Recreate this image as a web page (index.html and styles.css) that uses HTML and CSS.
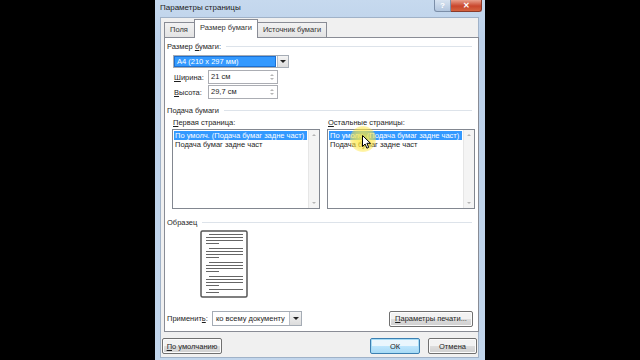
FILE: index.html
```html
<!DOCTYPE html>
<html lang="ru">
  <head>
    <meta charset="UTF-8" />
    <title>Параметры страницы</title>
    <link rel="stylesheet" href="styles.css">
  </head>
  <body>
    <div class="window">
      <div class="titlebar">
        <span class="title">Параметры страницы</span>
        <div class="caption-buttons">
          <span class="btn-help">?</span>
          <span class="btn-close">&#x2715;</span>
        </div>
      </div>
      <div class="client">
        <div class="tabs">
          <div class="tab">Поля</div>
          <div class="tab tab-active">Размер бумаги</div>
          <div class="tab">Источник бумаги</div>
        </div>
        <div class="panel">
          <div class="group-head head-size"><span>Размер <u>б</u>умаги:</span><i class="line"></i></div>
          <div class="combo combo-size">
            <span class="combo-value selected">A4 (210 x 297 мм)</span>
            <span class="combo-arrow"><b class="tri"></b></span>
          </div>
          <div class="field-row row-first">
            <span class="field-label"><u>Ш</u>ирина:</span>
            <div class="spin"><span class="spin-value">21 см</span><span class="spin-btns"><b class="up"></b><b class="down"></b></span></div>
          </div>
          <div class="field-row">
            <span class="field-label"><u>В</u>ысота:</span>
            <div class="spin"><span class="spin-value">29,7 см</span><span class="spin-btns"><b class="up"></b><b class="down"></b></span></div>
          </div>
          <div class="group-head head-feed"><span>Подача бумаги</span><i class="line"></i></div>
          <div class="feed">
            <div class="feed-col">
              <div class="feed-label"><u>П</u>ервая страница:</div>
              <div class="listbox">
                <div class="list-items">
                  <div class="item selected">По умолч. (Подача бумаг задне част)</div>
                  <div class="item">Подача бумаг задне част</div>
                </div>
                <div class="scrollbar"><b class="up"></b><b class="down"></b></div>
              </div>
            </div>
            <div class="feed-col">
              <div class="feed-label"><u>О</u>стальные страницы:</div>
              <div class="listbox">
                <div class="list-items">
                  <div class="item selected">По умолч. (Подача бумаг задне част)</div>
                  <div class="item">Подача бумаг задне част</div>
                </div>
                <div class="scrollbar"><b class="up"></b><b class="down"></b></div>
              </div>
            </div>
          </div>
          <div class="group-head head-sample"><span>Образец</span><i class="line"></i></div>
          <div class="sample">
            <svg width="48" height="68" viewBox="0 0 48 68">
              <rect x="1" y="1" width="46" height="66" rx="1.5" fill="#fff" stroke="#555" stroke-width="1.5"/>
              <g stroke="#666" stroke-width="1">
                <path d="M9 4.5h34M6 7.5h37M6 10.5h37M6 13.5h13"/>
                <path d="M9 18.5h34M6 21.5h37M6 24.5h37M6 27.5h13"/>
                <path d="M9 32.5h34M6 35.5h37M6 38.5h37M6 41.5h13"/>
                <path d="M9 46.5h34M6 49.5h37M6 52.5h37M6 55.5h13"/>
                <path d="M9 59.5h34M6 62.5h13"/>
              </g>
            </svg>
          </div>
          <div class="apply-row">
            <span class="apply-label">Применит<u>ь</u>:</span>
            <div class="combo combo-apply">
              <span class="combo-value">ко всему документу</span>
              <span class="combo-arrow"><b class="tri"></b></span>
            </div>
            <button class="button btn-print"><u>П</u>араметры печати...</button>
          </div>
        </div>
        <div class="footer">
          <button class="button btn-default"><u>П</u>о умолчанию</button>
          <div class="footer-right">
            <button class="button btn-ok">ОК</button>
            <button class="button btn-cancel">Отмена</button>
          </div>
        </div>
      </div>
    </div>
    <div class="cursor-glow"></div>
    <svg class="cursor" width="9" height="14" viewBox="0 0 9 14">
      <path d="M0.5 0.5v11l2.6-2.5 1.8 4.2 1.8-0.8-1.8-4.1h3.6z" fill="#fff" stroke="#000" stroke-width="1"/>
    </svg>
  </body>
</html>
```

FILE: styles.css
```css
* {
  margin: 0px;
  padding: 0px;
  box-sizing: border-box;
}
body {
  width: 640px;
  height: 360px;
  background-color: #000;
  overflow: hidden;
  font-family: "Liberation Sans", Arial, sans-serif;
  font-size: 7.5px;
  color: #1e1e1e;
  position: relative;
}
u {
  text-decoration: underline;
}
.window {
  margin-left: 155px;
  width: 330px;
  height: 360px;
  background: linear-gradient(to bottom, #c6d9ee, #bcd1ea 40px, #c2d6ec);
  display: flex;
  flex-direction: column;
  padding: 0px 6px 2px 5px;
}
.titlebar {
  height: 17px;
  display: flex;
  justify-content: space-between;
  align-items: flex-start;
}
.title {
  font-size: 8px;
  color: #222;
  margin-top: 3px;
  margin-left: 0px;
}
.caption-buttons {
  display: flex;
  margin-right: -3px;
}
.btn-help {
  width: 17px;
  height: 12px;
  background: linear-gradient(to bottom, #d7e3f1, #b3c6de);
  border: 1px solid #7b8ea8;
  border-top: none;
  border-radius: 0px 0px 0px 3px;
  color: #fff;
  font-size: 8px;
  font-weight: bold;
  text-align: center;
  line-height: 11px;
}
.btn-close {
  width: 31px;
  height: 12px;
  background: linear-gradient(to bottom, #e8a08c, #c9462c 55%, #d4633f);
  border: 1px solid #8a3a2a;
  border-top: none;
  border-left: none;
  border-radius: 0px 0px 3px 0px;
  color: #fff;
  font-size: 8px;
  font-weight: bold;
  text-align: center;
  line-height: 11px;
}
.client {
  flex: 1;
  background-color: #f0f0f0;
  padding: 1px 1px 0px 3px;
  display: flex;
  flex-direction: column;
  border: 1px solid #a0b2c8;
}
.tabs {
  display: flex;
  align-items: flex-end;
  height: 18px;
  position: relative;
  z-index: 1;
}
.tab {
  height: 15px;
  padding: 0px 5px;
  line-height: 14px;
  border: 1px solid #898c95;
  border-bottom: none;
  background: linear-gradient(to bottom, #f2f2f2, #e3e3e3);
  margin-right: -1px;
  color: #333;
  white-space: nowrap;
}
.tab:first-child {
  width: 31px;
}
.tab-active {
  height: 19px;
  line-height: 16px;
  background: #fff;
  padding: 0px 5px;
  margin-bottom: -1px;
  position: relative;
  z-index: 2;
}
.panel {
  width: 315px;
  height: 295px;
  background-color: #fff;
  border: 1px solid #898c95;
  padding: 0px 6px 0px 2px;
  display: flex;
  flex-direction: column;
}
.group-head {
  display: flex;
  align-items: center;
  height: 10px;
  margin-top: 5px;
}
.head-size {
  margin-top: 3px;
}
.line {
  flex: 1;
  border-top: 1px solid #dde3ea;
  margin-left: 5px;
}
.combo {
  display: flex;
  height: 13px;
  border: 1px solid #a5acb5;
  background-color: #fff;
}
.combo-size {
  width: 116px;
  margin-top: 4px;
  margin-left: 6px;
}
.combo-value {
  flex: 1;
  line-height: 11px;
  padding-left: 2px;
  margin: 0px;
}
.combo-value.selected {
  background-color: #3399ff;
  color: #fff;
  margin: 0px 1px 0px 0px;
  border: 1px solid #1c6fd0;
  line-height: 9px;
}
.combo-arrow {
  width: 11px;
  border-left: 1px solid #b9bec6;
  background: linear-gradient(to bottom, #f4f4f4, #dcdcdc);
  display: flex;
  align-items: center;
  justify-content: center;
}
.tri {
  border-left: 3px solid transparent;
  border-right: 3px solid transparent;
  border-top: 3px solid #222;
}
.field-row {
  display: flex;
  align-items: center;
  height: 14px;
  margin-top: 1px;
  margin-left: 7px;
}
.row-first {
  margin-top: 2px;
}
.field-label {
  width: 34px;
}
.spin {
  display: flex;
  width: 70px;
  height: 14px;
  border: 1px solid #abadb3;
}
.spin-value {
  flex: 1;
  line-height: 12px;
  padding-left: 2px;
}
.spin-btns {
  width: 10px;
  display: flex;
  flex-direction: column;
  justify-content: space-around;
  align-items: center;
  padding: 2px 0px;
}
.up {
  border-left: 2.5px solid transparent;
  border-right: 2.5px solid transparent;
  border-bottom: 2.5px solid #b5b5b5;
}
.down {
  border-left: 2.5px solid transparent;
  border-right: 2.5px solid transparent;
  border-top: 2.5px solid #b5b5b5;
}
.head-feed {
  margin-top: 6px;
}
.feed {
  display: flex;
  gap: 7px;
  margin-top: 3px;
  margin-left: 5px;
}
.feed-label {
  height: 10px;
  line-height: 10px;
  margin-left: 1px;
}
.listbox {
  width: 148px;
  height: 80px;
  margin-top: 1px;
  border: 1px solid #828790;
  display: flex;
}
.list-items {
  flex: 1;
  padding: 1px;
}
.item {
  height: 9px;
  line-height: 9px;
  padding-left: 1px;
  white-space: nowrap;
}
.item.selected {
  background-color: #3399ff;
  color: #fff;
}
.scrollbar {
  width: 11px;
  background-color: #f4f4f4;
  border-left: 1px solid #e6e6e6;
  display: flex;
  flex-direction: column;
  justify-content: space-between;
  align-items: center;
  padding: 4px 0px;
}
.head-sample {
  margin-top: 8px;
}
.sample {
  margin-top: 3px;
  margin-left: 33px;
  height: 68px;
}
.apply-row {
  display: flex;
  align-items: center;
  margin-top: 12px;
  height: 17px;
}
.apply-label {
  width: 45px;
}
.combo-apply {
  width: 90px;
  height: 15px;
}
.combo-apply .combo-value {
  line-height: 13px;
  padding-left: 3px;
}
.combo-apply .combo-arrow {
  width: 12px;
}
.button {
  font-family: "Liberation Sans", Arial, sans-serif;
  font-size: 7.5px;
  color: #1e1e1e;
  height: 16px;
  border: 1px solid #707070;
  border-radius: 2px;
  background: linear-gradient(to bottom, #f2f2f2 50%, #dddddd 50%, #cfcfcf);
  box-shadow: inset 0px 0px 0px 1px #fcfcfc;
}
.btn-print {
  width: 84px;
  margin-left: auto;
  margin-right: -1px;
}
.footer {
  flex: 1;
  display: flex;
  justify-content: space-between;
  align-items: flex-start;
  padding-top: 6px;
  margin-left: -2px;
}
.btn-default {
  width: 60px;
}
.footer-right {
  display: flex;
  gap: 8px;
}
.btn-ok {
  width: 50px;
  border-color: #3c7fb1;
  box-shadow: inset 0px 0px 0px 1px #a6dcf6;
  background: linear-gradient(to bottom, #eaf6fd 50%, #bee6fd 50%, #a7d9f5);
}
.btn-cancel {
  width: 49px;
}
.cursor-glow {
  position: absolute;
  left: 350px;
  top: 126px;
  width: 26px;
  height: 26px;
  border-radius: 50%;
  background: radial-gradient(circle, rgba(255, 235, 60, 0.85) 0%, rgba(255, 230, 60, 0.6) 55%, rgba(255, 230, 60, 0) 100%);
}
.cursor {
  position: absolute;
  left: 362px;
  top: 135px;
}
```
